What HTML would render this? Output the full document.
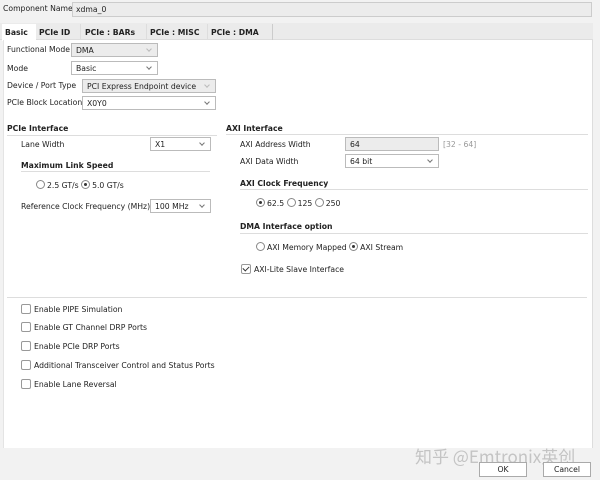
<!DOCTYPE html>
<html><head><style>
*{box-sizing:border-box;margin:0;padding:0}
body{width:600px;height:480px;background:#f2f2f2;font-family:"DejaVu Sans","Liberation Sans",sans-serif;font-size:7.7px;color:#222;position:relative;overflow:hidden}
.a{position:absolute;white-space:nowrap}
.sel{position:absolute;background:#fff;border:1px solid #bbb;height:14px;padding:1px 4px;line-height:11px}
.sel.g{background:#ececec}
.sel:after{content:"";position:absolute;right:6px;top:3px;width:3px;height:3px;border-right:1px solid #777;border-bottom:1px solid #777;transform:rotate(45deg)}
.sel.g:after{border-color:#bbb}
.sel.n:after{display:none}
.b{font-weight:bold}
.hr{position:absolute;height:1px;background:#ddd}
.r{display:inline-block;width:9px;height:9px;border:1px solid #888;border-radius:50%;vertical-align:-1px;margin-right:2px;position:relative;background:#fff}
.r.on:after{content:"";position:absolute;left:2px;top:2px;width:3px;height:3px;border-radius:50%;background:#333}
.c{display:inline-block;width:10px;height:10px;border:1px solid #999;border-radius:2px;vertical-align:-2px;margin-right:3px;background:#fff;position:relative}
.btn{position:absolute;border:1px solid #aaa;background:#fff;height:15px;text-align:center;line-height:13px}
</style></head><body>
<div class="a" style="left:3px;top:4px">Component Name</div>
<div class="a" style="left:72px;top:2px;width:520px;height:15px;background:#ececec;border:1px solid #ccc;padding:1px 3px;line-height:12px">xdma_0</div>
<div class="a" style="left:0;top:23px;width:593px;height:17px;background:#ebebeb;border-bottom:1px solid #ddd"></div>
<div class="a" style="left:2px;top:24px;width:34px;height:17px;background:#fff"></div>
<div class="a b" style="left:5px;top:28px">Basic</div>
<div class="a b" style="left:39px;top:28px">PCIe ID</div>
<div class="a b" style="left:85px;top:28px">PCIe : BARs</div>
<div class="a b" style="left:150px;top:28px">PCIe : MISC</div>
<div class="a b" style="left:211px;top:28px">PCIe : DMA</div>
<div class="a" style="left:80px;top:24px;width:1px;height:16px;background:#ddd"></div>
<div class="a" style="left:146px;top:24px;width:1px;height:16px;background:#ddd"></div>
<div class="a" style="left:207px;top:24px;width:1px;height:16px;background:#ddd"></div>
<div class="a" style="left:272px;top:24px;width:1px;height:16px;background:#ccc"></div>
<div class="a" style="left:3px;top:40px;width:590px;height:408px;background:#fff;border-right:1px solid #ddd;border-left:1px solid #e4e4e4"></div>

<div class="a" style="left:7px;top:45px">Functional Mode</div><div class="sel g" style="left:71px;top:43px;width:87px">DMA</div>
<div class="a" style="left:7px;top:64px">Mode</div><div class="sel" style="left:71px;top:61px;width:87px">Basic</div>
<div class="a" style="left:7px;top:81px">Device / Port Type</div><div class="sel g" style="left:82px;top:79px;width:134px">PCI Express Endpoint device</div>
<div class="a" style="left:7px;top:98px">PCIe Block Location</div><div class="sel" style="left:82px;top:96px;width:134px">X0Y0</div>

<div class="a b" style="left:7px;top:124px">PCIe Interface</div><div class="hr" style="left:7px;top:135px;width:210px"></div>
<div class="a" style="left:21px;top:140px">Lane Width</div><div class="sel" style="left:150px;top:137px;width:61px">X1</div>
<div class="a b" style="left:21px;top:161px">Maximum Link Speed</div><div class="hr" style="left:21px;top:171px;width:189px"></div>
<div class="a" style="left:36px;top:180px"><span class="r"></span>2.5 GT/s <span class="r on"></span>5.0 GT/s</div>
<div class="a" style="left:21px;top:202px">Reference Clock Frequency (MHz)</div><div class="sel" style="left:150px;top:199px;width:61px">100 MHz</div>

<div class="a b" style="left:226px;top:124px">AXI Interface</div><div class="hr" style="left:226px;top:134px;width:362px"></div>
<div class="a" style="left:240px;top:140px">AXI Address Width</div><div class="sel g n" style="left:345px;top:137px;width:94px">64</div>
<div class="a" style="left:443px;top:140px;color:#999">[32 - 64]</div>
<div class="a" style="left:240px;top:157px">AXI Data Width</div><div class="sel" style="left:345px;top:154px;width:94px">64 bit</div>
<div class="a b" style="left:240px;top:179px">AXI Clock Frequency</div><div class="hr" style="left:240px;top:189px;width:348px"></div>
<div class="a" style="left:256px;top:198px"><span class="r on"></span>62.5 <span class="r"></span>125 <span class="r"></span>250</div>
<div class="a b" style="left:240px;top:222px">DMA Interface option</div><div class="hr" style="left:240px;top:233px;width:348px"></div>
<div class="a" style="left:256px;top:242px"><span class="r"></span>AXI Memory Mapped <span class="r on"></span>AXI Stream</div>
<div class="a" style="left:241px;top:264px"><span class="c"><span style="position:absolute;left:2px;top:0px;width:4px;height:6px;border-right:1px solid #333;border-bottom:1px solid #333;transform:rotate(45deg)"></span></span>AXI-Lite Slave Interface</div>

<div class="hr" style="left:7px;top:297px;width:580px"></div>
<div class="a" style="left:21px;top:304px"><span class="c"></span>Enable PIPE Simulation</div>
<div class="a" style="left:21px;top:322px"><span class="c"></span>Enable GT Channel DRP Ports</div>
<div class="a" style="left:21px;top:341px"><span class="c"></span>Enable PCIe DRP Ports</div>
<div class="a" style="left:21px;top:360px"><span class="c"></span>Additional Transceiver Control and Status Ports</div>
<div class="a" style="left:21px;top:379px"><span class="c"></span>Enable Lane Reversal</div>

<div class="a" style="left:415px;top:443px;font-family:'Noto Sans CJK SC',sans-serif;font-size:17px;color:rgba(150,150,150,.5)">知乎 @Emtronix英创</div>
<div class="btn" style="left:479px;top:462px;width:48px">OK</div>
<div class="btn" style="left:543px;top:462px;width:48px">Cancel</div>
</body></html>
